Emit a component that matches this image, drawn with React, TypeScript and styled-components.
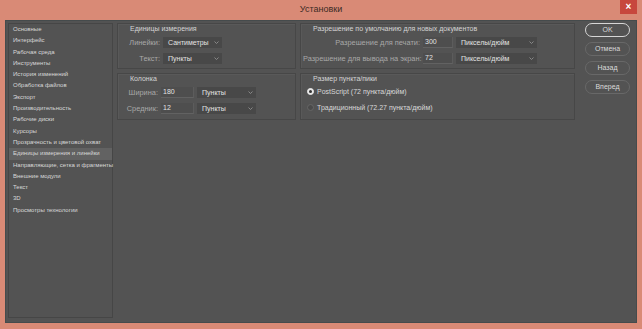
import React from 'react';
import styled, { createGlobalStyle } from 'styled-components';

const GlobalStyle = createGlobalStyle`
  html, body {
    margin: 0;
    padding: 0;
    background: #d98a76;
  }
  * {
    box-sizing: border-box;
  }
`;

const Window = styled.div`
  width: 642px;
  height: 329px;
  background: #d98a76;
  display: flex;
  flex-direction: column;
  padding: 0 5px 6px 5px;
  font-family: 'Liberation Sans', Arial, sans-serif;
`;

const TitleBar = styled.div`
  height: 20px;
  display: grid;
  grid-template-columns: 1fr auto 1fr;
  align-items: start;
`;

const Title = styled.div`
  grid-column: 2;
  line-height: 19px;
  font-size: 9px;
  color: #3b2a25;
`;

const CloseButton = styled.div`
  grid-column: 3;
  justify-self: end;
  width: 17px;
  height: 14px;
  background: #c7473d;
  color: #fff;
  font-size: 10px;
  line-height: 14px;
  text-align: center;
  font-weight: bold;
`;

const Body = styled.div`
  flex: 1;
  background: #535353;
  border: 1px solid #454b4c;
  display: flex;
  align-items: flex-start;
  padding: 2px 3px 4px 2px;
  gap: 4px;
`;

const Sidebar = styled.div`
  width: 105px;
  align-self: stretch;
  border: 1px solid #464646;
`;

const NavItem = styled.div<{ active?: boolean }>`
  height: 11.3px;
  line-height: 11.3px;
  padding-left: 4px;
  font-size: 6px;
  color: #d8d8d8;
  white-space: nowrap;
  background: ${(p) => (p.active ? '#626262' : 'transparent')};
`;

const Column = styled.div<{ width: number }>`
  width: ${(p) => p.width}px;
  display: flex;
  flex-direction: column;
  gap: 4px;
`;

const Group = styled.div<{ height: number }>`
  height: ${(p) => p.height}px;
  border: 1px solid #474747;
  box-shadow: inset 1px 1px 0 #595959;
  padding: 0 0 0 12px;
`;

const GroupTitle = styled.div`
  font-size: 7px;
  line-height: 9px;
  color: #d4d4d4;
  margin-bottom: 4px;
`;

const FormGrid = styled.div<{ cols: string; indent: number }>`
  display: grid;
  grid-template-columns: ${(p) => p.cols};
  column-gap: 3px;
  row-gap: 5px;
  align-items: center;
  margin-left: ${(p) => -p.indent}px;
`;

const Label = styled.div`
  font-size: 7.4px;
  color: #a8a8a8;
  text-align: right;
  white-space: nowrap;
`;

const Select = styled.div`
  height: 11px;
  background: #484848;
  display: flex;
  align-items: center;
  justify-content: space-between;
  padding: 0 3px 0 5px;
  font-size: 7px;
  color: #e2e2e2;
`;

const Chevron = () => (
  <svg width="5" height="3" viewBox="0 0 5 3">
    <path d="M0.5 0.5 L2.5 2.5 L4.5 0.5" stroke="#8e8e8e" strokeWidth="0.9" fill="none" />
  </svg>
);

const Field = styled.div`
  height: 11px;
  background: #4e4e4e;
  border-bottom: 1px solid #626262;
  border-right: 1px solid #5c5c5c;
  padding-left: 2px;
  font-size: 7px;
  line-height: 10px;
  color: #e2e2e2;
`;

const RadioRow = styled.div`
  display: flex;
  align-items: center;
  gap: 3px;
  height: 11px;
  margin-left: -6px;
  margin-top: -1px;
  margin-bottom: 6px;
  font-size: 7px;
  color: #d8d8d8;
`;

const RadioDot = styled.div<{ checked?: boolean }>`
  width: 7px;
  height: 7px;
  border-radius: 50%;
  background: ${(p) => (p.checked ? '#e8e8e8' : '#4a4a4a')};
  border: 1px solid ${(p) => (p.checked ? '#e8e8e8' : '#666666')};
  display: flex;
  align-items: center;
  justify-content: center;
  &::after {
    content: '';
    width: 3px;
    height: 3px;
    border-radius: 50%;
    background: ${(p) => (p.checked ? '#333' : 'transparent')};
  }
`;

const Buttons = styled.div`
  margin-left: 6px;
  display: flex;
  flex-direction: column;
  gap: 5px;
`;

const Button = styled.div<{ primary?: boolean }>`
  width: 45px;
  height: 14px;
  border-radius: 7px;
  border: 1px solid ${(p) => (p.primary ? '#d6d6d6' : '#686868')};
  font-size: 7px;
  line-height: 12px;
  text-align: center;
  color: #dadada;
`;

const navItems = [
  'Основные',
  'Интерфейс',
  'Рабочая среда',
  'Инструменты',
  'История изменений',
  'Обработка файлов',
  'Экспорт',
  'Производительность',
  'Рабочие диски',
  'Курсоры',
  'Прозрачность и цветовой охват',
  'Единицы измерения и линейки',
  'Направляющие, сетка и фрагменты',
  'Внешние модули',
  'Текст',
  '3D',
  'Просмотры технологии',
];

export default function App() {
  return (
    <>
      <GlobalStyle />
      <Window>
        <TitleBar>
          <Title>Установки</Title>
          <CloseButton>×</CloseButton>
        </TitleBar>
        <Body>
          <Sidebar>
            {navItems.map((n) => (
              <NavItem key={n} active={n === 'Единицы измерения и линейки'}>
                {n}
              </NavItem>
            ))}
          </Sidebar>

          <Column width={179}>
            <Group height={46}>
              <GroupTitle>Единицы измерения</GroupTitle>
              <FormGrid cols="42px 59px" indent={12}>
                <Label>Линейки:</Label>
                <Select>Сантиметры<Chevron /></Select>
                <Label>Текст:</Label>
                <Select>Пункты<Chevron /></Select>
              </FormGrid>
            </Group>
            <Group height={47}>
              <GroupTitle>Колонка</GroupTitle>
              <FormGrid cols="40px 33px 59px" indent={12}>
                <Label>Ширина:</Label>
                <Field>180</Field>
                <Select>Пункты<Chevron /></Select>
                <Label>Средник:</Label>
                <Field>12</Field>
                <Select>Пункты<Chevron /></Select>
              </FormGrid>
            </Group>
          </Column>

          <Column width={275}>
            <Group height={46}>
              <GroupTitle>Разрешение по умолчанию для новых документов</GroupTitle>
              <FormGrid cols="117px 30px 81px" indent={10}>
                <Label>Разрешение для печати:</Label>
                <Field>300</Field>
                <Select>Пикселы/дюйм<Chevron /></Select>
                <Label>Разрешение для вывода на экран:</Label>
                <Field>72</Field>
                <Select>Пикселы/дюйм<Chevron /></Select>
              </FormGrid>
            </Group>
            <Group height={47}>
              <GroupTitle>Размер пункта/пики</GroupTitle>
              <RadioRow>
                <RadioDot checked />
                PostScript (72 пункта/дюйм)
              </RadioRow>
              <RadioRow>
                <RadioDot />
                Традиционный (72.27 пункта/дюйм)
              </RadioRow>
            </Group>
          </Column>

          <Buttons>
            <Button primary>OK</Button>
            <Button>Отмена</Button>
            <Button>Назад</Button>
            <Button>Вперед</Button>
          </Buttons>
        </Body>
      </Window>
    </>
  );
}
